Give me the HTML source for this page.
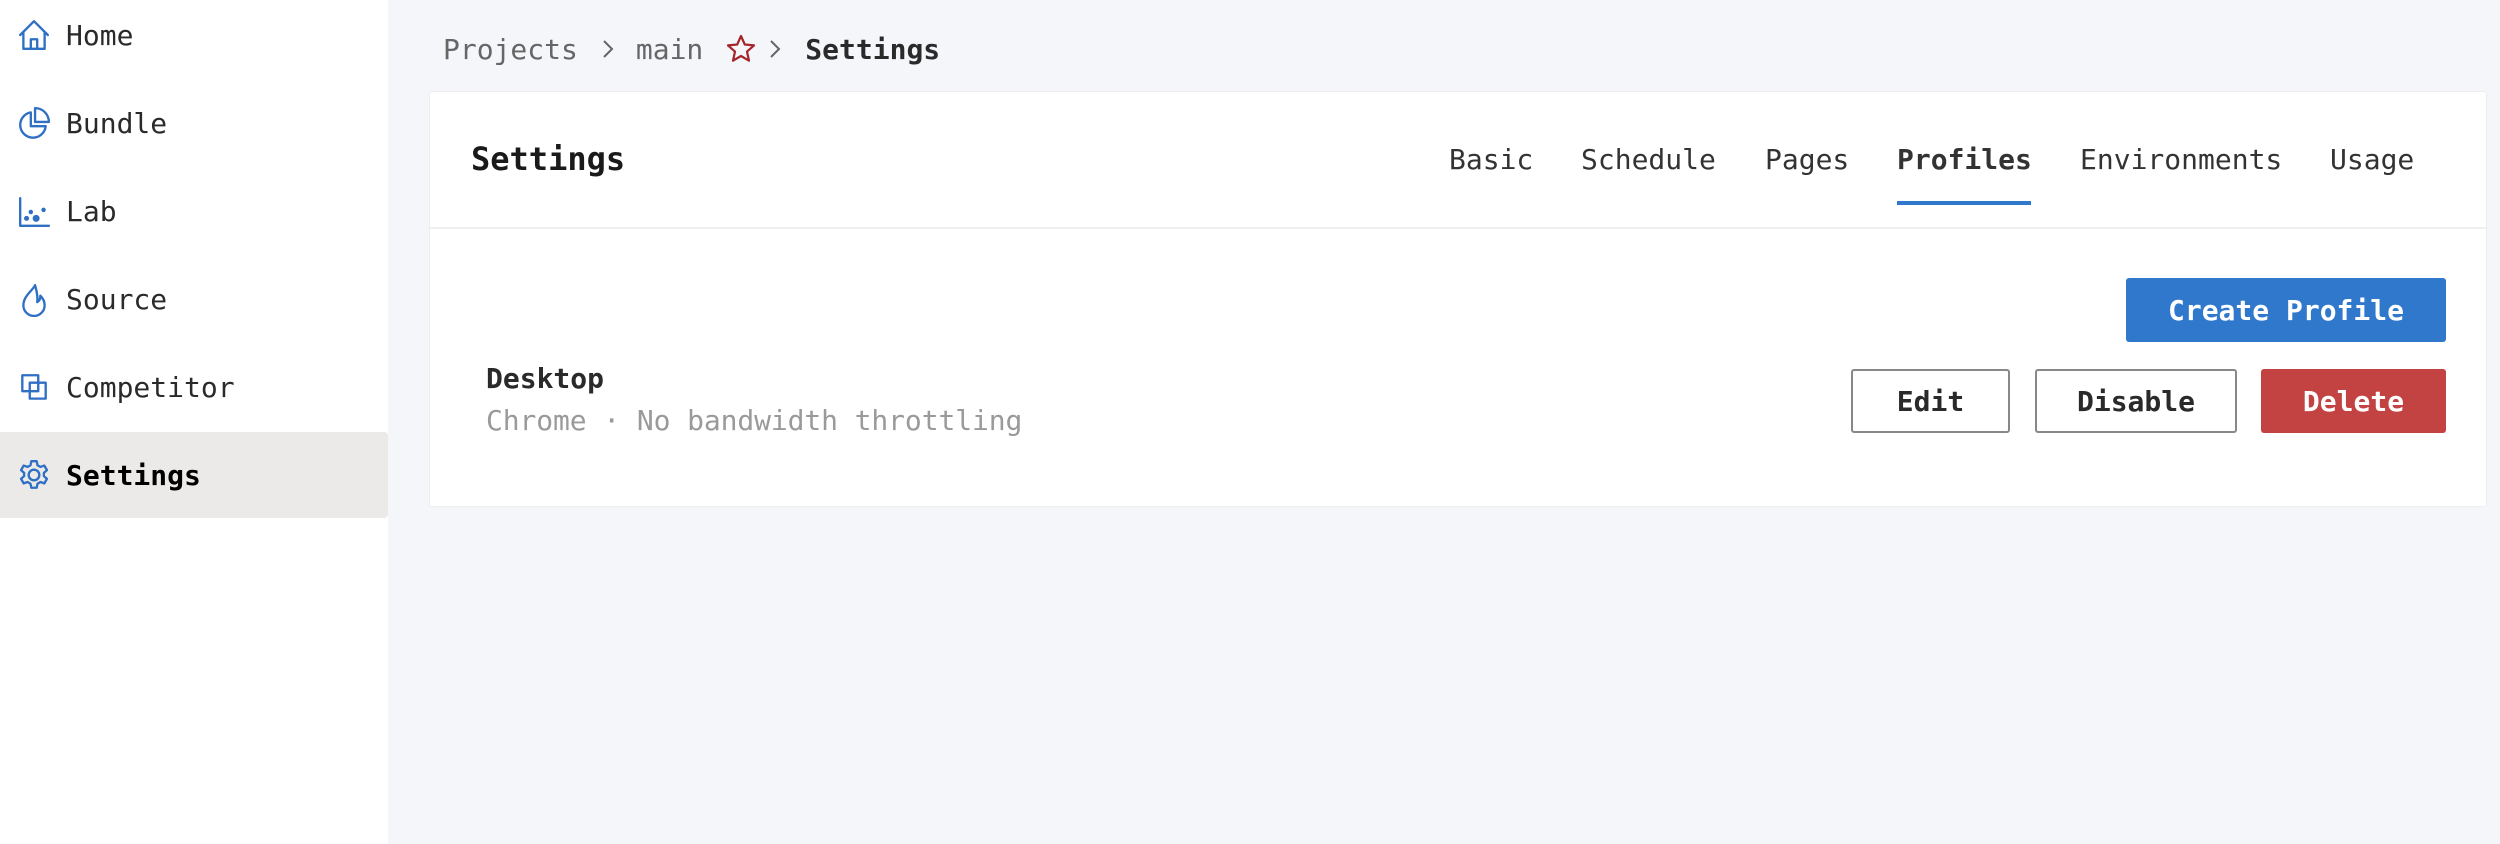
<!DOCTYPE html>
<html><head><meta charset="utf-8"><style>
*{box-sizing:border-box;margin:0;padding:0}
body{width:2500px;height:844px;background:#f5f6fa;font-family:"DejaVu Sans Mono","Liberation Mono",monospace;color:#333;position:relative;overflow:hidden}
#side{position:absolute;left:0;top:0;width:388px;height:844px;background:#fff}
.it{position:absolute;left:0;width:388px;height:86px;display:flex;align-items:center;font-size:28px;color:#2a2a2a}
.it svg{position:absolute;left:17px;width:34px;height:34px;fill:none;stroke:#2f6fc4;stroke-width:2.2;stroke-linejoin:round;stroke-linecap:round}
.it span{position:absolute;left:66px}
.act{background:#ebeae8;border-radius:0 4px 4px 0;font-weight:bold;color:#000}
#bc{position:absolute;left:443px;top:30px;font-size:28px;color:#666;display:flex;align-items:center;height:38px}
.chev{width:16px;height:22px;fill:none;stroke:#666;stroke-width:2}
#card{position:absolute;left:429px;top:91px;width:2058px;height:416px;background:#fff;border:1px solid #eee;border-radius:3px}
#hdr{height:137px;border-bottom:2px solid #f0f0f0;position:relative}
.tab{position:absolute;top:51px;font-size:28px;color:#333}
.btn{position:absolute;height:64px;font-size:28px;font-weight:bold;display:flex;align-items:center;justify-content:center;border-radius:3px}
</style></head><body>
<div id="side">
<div class="it" style="top:-8px"><svg viewBox="0 0 32 32"><path d="M3 16L16 3l13 13M6 13v16h20V13M13 29v-9h6v9"/></svg><span>Home</span></div>
<div class="it" style="top:80px"><svg viewBox="0 0 32 32"><path d="M13 6A12 12 0 1 0 27 19H13z"/><path d="M17 2v13h13A13 13 0 0 0 17 2z"/></svg><span>Bundle</span></div>
<div class="it" style="top:168.5px"><svg viewBox="0 0 32 32"><path d="M3 3v26h27"/><circle cx="9" cy="22" r="1.3" fill="#2f6fc4"/><circle cx="18" cy="22" r="2.2" fill="#2f6fc4"/><circle cx="13" cy="16" r="1" fill="#2f6fc4"/><circle cx="25" cy="14" r="1" fill="#2f6fc4"/></svg><span>Lab</span></div>
<div class="it" style="top:256.5px"><svg viewBox="0 0 32 32"><path d="M17 2c-2 5-11 10-11 19a10 10 0 0 0 20 0c0-4-2-7-4-9 0 3-1 5-3 6 1-6-1-12-2-16z"/></svg><span>Source</span></div>
<div class="it" style="top:344.5px"><svg viewBox="0 0 32 32"><rect x="5" y="4" width="15" height="15"/><rect x="12" y="11" width="15" height="15"/></svg><span>Competitor</span></div>
<div class="it act" style="top:432px"><svg viewBox="0 0 32 32"><circle cx="16" cy="16" r="5"/><path d="M13.5 3h5l.8 3.8 2.7 1.6 3.7-1.3 2.5 4.3-2.9 2.6v3l2.9 2.6-2.5 4.3-3.7-1.3-2.7 1.6-.8 3.8h-5l-.8-3.8-2.7-1.6-3.7 1.3-2.5-4.3 2.9-2.6v-3L3.8 11.4l2.5-4.3 3.7 1.3 2.7-1.6z"/></svg><span>Settings</span></div>
</div>
<div id="bc"><span>Projects</span><svg class="chev" viewBox="0 0 16 22" style="margin:0 20px 0 22px"><path d="M4 3l8 8-8 8"/></svg><span>main</span>
<svg width="32" height="32" viewBox="0 0 32 32" style="margin-left:22px"><path d="M16 3l3.8 8.5 9.2.9-7 6.2 2 9.1L16 23l-8 4.7 2-9.1-7-6.2 9.2-.9z" fill="none" stroke="#a3262a" stroke-width="2.2" stroke-linejoin="round"/></svg>
<svg class="chev" viewBox="0 0 16 22" style="margin:0 22px 0 10px"><path d="M4 3l8 8-8 8"/></svg><b style="color:#2a2a2a">Settings</b></div>
<div id="card">
<div id="hdr">
<div style="position:absolute;left:41px;top:48px;font-size:32px;font-weight:bold;color:#1a1a1a">Settings</div>
<div class="tab" style="left:1019px">Basic</div>
<div class="tab" style="left:1151px">Schedule</div>
<div class="tab" style="left:1335px">Pages</div>
<div class="tab" style="left:1467px;font-weight:bold">Profiles</div>
<div style="position:absolute;left:1467px;top:109px;width:134px;height:4px;background:#2f78cc"></div>
<div class="tab" style="left:1650px">Environments</div>
<div class="tab" style="left:1900px">Usage</div>
</div>
<div class="btn" style="left:1696px;top:186px;width:320px;background:#2f78cc;color:#fff">Create Profile</div>
<div style="position:absolute;left:56px;top:270px;font-size:28px;font-weight:bold;color:#2a2a2a">Desktop</div>
<div style="position:absolute;left:56px;top:312px;font-size:28px;color:#9a9a9a;letter-spacing:-0.1px">Chrome · No bandwidth throttling</div>
<div class="btn" style="left:1421px;top:277px;width:159px;border:2px solid #888;color:#2a2a2a">Edit</div>
<div class="btn" style="left:1605px;top:277px;width:202px;border:2px solid #888;color:#2a2a2a">Disable</div>
<div class="btn" style="left:1831px;top:277px;width:185px;background:#c34242;color:#fff">Delete</div>
</div>
</body></html>
